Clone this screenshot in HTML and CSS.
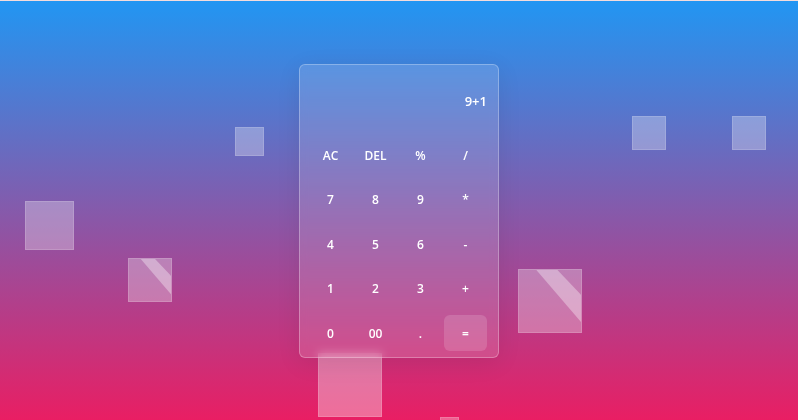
FILE: index.html
```html
<!DOCTYPE html>
<html>
<head>
    <title>Glass Calculator</title>
    <link rel="stylesheet" href="styles.css">
</head>
<body>
    <div class="topline"></div>
    <section class="page">
        <div class="square sq1"></div>
        <div class="square sq2"></div>
        <div class="square sq3 shine"></div>
        <div class="square sq4 shine"></div>
        <div class="square sq5"></div>
        <div class="square sq6"></div>
        <div class="square sq7"></div>
        <div class="square sq8"></div>

        <div class="calculator">
            <div class="value" id="value">9+1</div>
            <div class="keys">
                <span>AC</span>
                <span>DEL</span>
                <span>%</span>
                <span>/</span>
                <span>7</span>
                <span>8</span>
                <span>9</span>
                <span>*</span>
                <span>4</span>
                <span>5</span>
                <span>6</span>
                <span>-</span>
                <span>1</span>
                <span>2</span>
                <span>3</span>
                <span>+</span>
                <span>0</span>
                <span>00</span>
                <span>.</span>
                <span class="equal">=</span>
            </div>
        </div>
    </section>
</body>
</html>
```

FILE: styles.css
```css
* {
    box-sizing: border-box;
}
body {
    margin: 0;
    font-family: "Open Sans", "Noto Sans", sans-serif;
    overflow: hidden;
}
.topline {
    position: absolute;
    top: 0;
    left: 0;
    right: 0;
    height: 1px;
    background: #f3dcdc;
    z-index: 5;
}
.page {
    position: relative;
    min-height: 100vh;
    display: flex;
    align-items: center;
    justify-content: center;
    padding-top: 2px;
    background: linear-gradient(#2196f3, #e91e63);
    overflow: hidden;
}
.square {
    position: absolute;
    background: rgba(255, 255, 255, 0.3);
    border: 1px solid rgba(255, 255, 255, 0.15);
    overflow: hidden;
}
.shine::before {
    content: '';
    position: absolute;
    inset: 0;
    background: rgba(255, 255, 255, 0.35);
    clip-path: polygon(28% 0, 62% 0, 100% 40%, 100% 84%);
}
.sq1 { left: 235px; top: 127px; width: 29px; height: 29px; }
.sq2 { left: 25px; top: 201px; width: 49px; height: 49px; }
.sq3 { left: 128px; top: 258px; width: 44px; height: 44px; }
.sq4 { left: 518px; top: 269px; width: 64px; height: 64px; }
.sq5 { left: 632px; top: 116px; width: 34px; height: 34px; }
.sq6 { left: 732px; top: 116px; width: 34px; height: 34px; }
.sq7 { left: 318px; top: 353px; width: 64px; height: 64px; background: rgba(255, 255, 255, 0.35); }
.sq8 { left: 440px; top: 417px; width: 19px; height: 19px; }

.calculator {
    position: relative;
    z-index: 2;
    width: 200px;
    height: 294px;
    background: rgba(255, 255, 255, 0.14);
    border: 1px solid rgba(255, 255, 255, 0.28);
    border-radius: 6px;
    box-shadow: 0 5px 25px rgba(0, 0, 0, 0.08);
    backdrop-filter: blur(4px);
    color: #fff;
}
.value {
    height: 72px;
    display: flex;
    align-items: center;
    justify-content: flex-end;
    padding-right: 11px;
    font-size: 13px;
    font-weight: 600;
}
.keys {
    display: grid;
    grid-template-columns: repeat(4, 43px);
    grid-auto-rows: 36px;
    column-gap: 2px;
    row-gap: 8.5px;
    padding-left: 9px;
}
.keys span {
    display: flex;
    align-items: center;
    justify-content: center;
    font-size: 12px;
    font-weight: 600;
    cursor: pointer;
    border-radius: 6px;
}
.keys .equal {
    background: rgba(255, 255, 255, 0.15);
}
```
